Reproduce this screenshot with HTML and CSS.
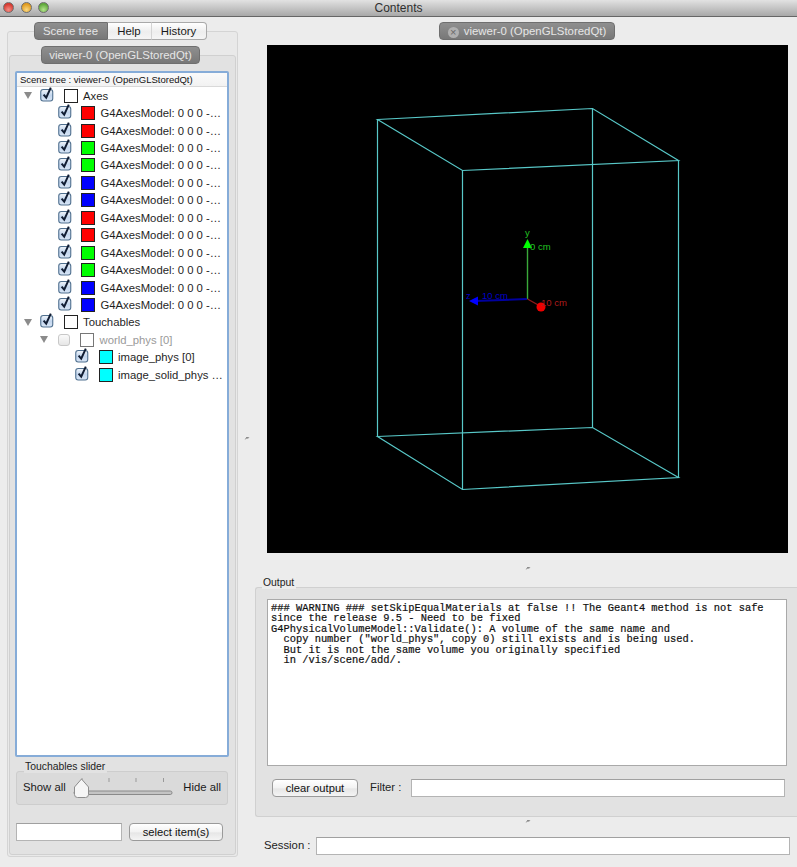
FILE: index.html
```html
<!DOCTYPE html>
<html lang="en">
<head>
<meta charset="utf-8">
<title>Contents</title>
<link rel="stylesheet" href="styles.css">
</head>
<body>
<svg class="defs" width="0" height="0" aria-hidden="true">
  <defs>
    <linearGradient id="boxfill" x1="0" y1="0" x2="0" y2="1"><stop offset="0" stop-color="#f2f6fb"/><stop offset="0.5" stop-color="#c3d6ee"/><stop offset="1" stop-color="#d9e6f6"/></linearGradient>
    <symbol id="chk" viewBox="0 0 14 16">
      <rect x="0.75" y="3.5" width="12" height="11.5" rx="2.5" fill="url(#boxfill)" stroke="#50708f" stroke-width="1.1"/>
      <path d="M3.6 8.6 L6.2 11.6 L10.8 1.6" fill="none" stroke="#111d33" stroke-width="2"/>
    </symbol>
    <symbol id="arrow" viewBox="0 0 6 5">
      <path d="M0.5 4 L2.5 1 L5.5 1.5 L4 2.5 L2.5 2.5 Z" fill="#777"/>
    </symbol>
  </defs>
</svg>
<div class="app">
  <header class="titlebar">
    <div class="lights">
      <span class="light light-red"></span>
      <span class="light light-yellow"></span>
      <span class="light light-green"></span>
    </div>
    <div class="title">Contents</div>
  </header>

  <div class="main">
    <aside class="side">
      <nav class="tabs">
        <span class="tab tab-on tab-scene">Scene tree</span>
        <span class="tab tab-help">Help</span>
        <span class="tab tab-history">History</span>
      </nav>
      <div class="tab-frame">
        <div class="inner-tab-row"><span class="tab tab-on tab-single tab-viewer-side">viewer-0 (OpenGLStoredQt)</span></div>
        <div class="inner-frame">
          <div class="tree">
            <div class="tree-head">Scene tree : viewer-0 (OpenGLStoredQt)</div>
            <div class="tree-rows">
              <div class="row"><span class="tri"></span><svg class="chk"><use href="#chk"/></svg><span class="sw sw-white"></span><span>Axes</span></div>
              <div class="row d1"><span class="notri"></span><svg class="chk"><use href="#chk"/></svg><span class="sw sw-red"></span><span>G4AxesModel: 0 0 0 -…</span></div>
              <div class="row d1"><span class="notri"></span><svg class="chk"><use href="#chk"/></svg><span class="sw sw-red"></span><span>G4AxesModel: 0 0 0 -…</span></div>
              <div class="row d1"><span class="notri"></span><svg class="chk"><use href="#chk"/></svg><span class="sw sw-green"></span><span>G4AxesModel: 0 0 0 -…</span></div>
              <div class="row d1"><span class="notri"></span><svg class="chk"><use href="#chk"/></svg><span class="sw sw-green"></span><span>G4AxesModel: 0 0 0 -…</span></div>
              <div class="row d1"><span class="notri"></span><svg class="chk"><use href="#chk"/></svg><span class="sw sw-blue"></span><span>G4AxesModel: 0 0 0 -…</span></div>
              <div class="row d1"><span class="notri"></span><svg class="chk"><use href="#chk"/></svg><span class="sw sw-blue"></span><span>G4AxesModel: 0 0 0 -…</span></div>
              <div class="row d1"><span class="notri"></span><svg class="chk"><use href="#chk"/></svg><span class="sw sw-red"></span><span>G4AxesModel: 0 0 0 -…</span></div>
              <div class="row d1"><span class="notri"></span><svg class="chk"><use href="#chk"/></svg><span class="sw sw-red"></span><span>G4AxesModel: 0 0 0 -…</span></div>
              <div class="row d1"><span class="notri"></span><svg class="chk"><use href="#chk"/></svg><span class="sw sw-green"></span><span>G4AxesModel: 0 0 0 -…</span></div>
              <div class="row d1"><span class="notri"></span><svg class="chk"><use href="#chk"/></svg><span class="sw sw-green"></span><span>G4AxesModel: 0 0 0 -…</span></div>
              <div class="row d1"><span class="notri"></span><svg class="chk"><use href="#chk"/></svg><span class="sw sw-blue"></span><span>G4AxesModel: 0 0 0 -…</span></div>
              <div class="row d1"><span class="notri"></span><svg class="chk"><use href="#chk"/></svg><span class="sw sw-blue"></span><span>G4AxesModel: 0 0 0 -…</span></div>
              <div class="row"><span class="tri"></span><svg class="chk"><use href="#chk"/></svg><span class="sw sw-white"></span><span>Touchables</span></div>
              <div class="row d1 row-off"><span class="tri"></span><span class="chk-off"></span><span class="sw sw-white"></span><span>world_phys [0]</span></div>
              <div class="row d2"><span class="notri"></span><svg class="chk"><use href="#chk"/></svg><span class="sw sw-cyan"></span><span>image_phys [0]</span></div>
              <div class="row d2"><span class="notri"></span><svg class="chk"><use href="#chk"/></svg><span class="sw sw-cyan"></span><span>image_solid_phys …</span></div>
            </div>
          </div>
          <div class="slider-group">
            <span class="legend legend-slider">Touchables slider</span>
            <span>Show all</span>
            <svg class="slider" width="103" height="24" viewBox="0 0 103 24">
              <rect x="1" y="15" width="98" height="3.5" rx="1.7" fill="#c4c4c4" stroke="#8a8a8a"/>
              <path d="M9 2v3M36 2v4M63 2v4M90.500 2v4" stroke="#999" stroke-width="1"/>
              <path d="M1.500 11 L8.500 3 L15.500 11 V18.500 Q15.500 21.500 12.500 21.500 H4.500 Q1.500 21.500 1.500 18.500 Z" fill="#f6f6f6" stroke="#8e8e8e"/>
            </svg>
            <span>Hide all</span>
          </div>
          <div class="select-row">
            <span class="input input-select"></span>
            <span class="btn btn-select">select item(s)</span>
          </div>
        </div>
      </div>
    </aside>

    <div class="split-v"><svg class="grip"><use href="#arrow"/></svg></div>

    <section class="content">
      <div class="viewer-tab-row">
        <span class="tab tab-on tab-single tab-viewer"><span class="close">×</span>viewer-0 (OpenGLStoredQt)</span>
      </div>
      <svg class="scene" width="521" height="508" viewBox="267 45 521 508">
        <rect x="267" y="45" width="521" height="508" fill="#000"/>
        <g fill="none" stroke="#58c8c8" stroke-width="1.2">
          <path d="M377.500 119.500 L592.500 108.500 L678.500 160.500 L462.500 170.500 Z"/>
          <path d="M377.500 436.500 L592.500 427.500 L678.500 477.500 L462.500 489.500 Z"/>
          <path d="M377.500 119.500 V436.500 M462.500 170.500 V489.500 M592.500 108.500 V427.500 M678.500 160.500 V477.500"/>
        </g>
        <path d="M527.500 299 V245" stroke="#3aa83a" stroke-width="1.400"/>
        <path d="M527.500 239 L532 248 H523 Z" fill="#00ff00"/>
        <text class="axis-label axis-green" x="525" y="236">y</text>
        <text class="axis-label axis-green" x="530" y="250">0 cm</text>
        <path d="M527 299 L475 301" stroke="#0000a0" stroke-width="2"/>
        <path d="M469 301 L478 296.500 V305.500 Z" fill="#0000ff"/>
        <text class="axis-label axis-blue" x="466" y="299">z</text>
        <text class="axis-label axis-blue" x="482" y="299">10 cm</text>
        <path d="M527.500 299 L540 306" stroke="#8e1a1a" stroke-width="1.400"/>
        <circle cx="541" cy="307" r="4.500" fill="#f00000"/>
        <text class="axis-label axis-red" x="541" y="306">10 cm</text>
      </svg>
      <div class="split-h split-a"><svg class="grip"><use href="#arrow"/></svg></div>
      <div class="output">
        <span class="legend legend-output">Output</span>
        <pre class="log">### WARNING ### setSkipEqualMaterials at false !! The Geant4 method is not safe
since the release 9.5 - Need to be fixed
G4PhysicalVolumeModel::Validate(): A volume of the same name and
  copy number ("world_phys", copy 0) still exists and is being used.
  But it is not the same volume you originally specified
  in /vis/scene/add/.</pre>
        <div class="output-controls">
          <span class="btn btn-clear">clear output</span>
          <span class="filter-label">Filter :</span>
          <span class="input input-filter"></span>
        </div>
      </div>
      <div class="split-h split-b"><svg class="grip"><use href="#arrow"/></svg></div>
      <div class="session">
        <span class="session-label">Session :</span>
        <span class="input input-session"></span>
      </div>
    </section>
  </div>
</div>
</body>
</html>
```
FILE: styles.css
```css
* { box-sizing: border-box; }
html, body { margin: 0; padding: 0; }
body { font-family: "Liberation Sans", Arial, sans-serif; font-size: 11.300px; color: #1a1a1a; background: #ececec; }
.defs { position: absolute; }

.app { width: 797px; height: 867px; display: flex; flex-direction: column; background: #ececec; overflow: hidden; }

/* title bar */
.titlebar { height: 17px; flex: none; display: flex; align-items: center; position: relative; justify-content: center; background: linear-gradient(#e2e2e2, #a8a8a8); border-bottom: 1px solid #666; }
.lights { position: absolute; left: 3px; top: 2px; display: flex; gap: 6.500px; }
.light { width: 11px; height: 11px; border-radius: 50%; border: 1px solid #6e6e6e; }
.light-red { background: radial-gradient(circle at 50% 75%, #f58d84, #d63a30 70%); }
.light-yellow { background: radial-gradient(circle at 50% 75%, #fbd980, #e09a1e 70%); }
.light-green { background: radial-gradient(circle at 50% 75%, #b4e48c, #5fa83a 70%); }
.title { font-size: 12px; color: #2f2f2f; line-height: 16px; }

.main { flex: 1; min-height: 0; display: flex; padding-left: 7px; }

/* left pane */
.side { width: 231px; flex: none; padding-top: 5px; margin-bottom: 10px; display: flex; flex-direction: column; }
.tabs { display: flex; justify-content: center; height: 18px; flex: none; margin-left: -5px; position: relative; z-index: 1; }
.tab { height: 18px; line-height: 17px; text-align: center; font-size: 11.400px; background: linear-gradient(#ffffff, #eeeeee 55%, #f5f5f5); border: 1px solid #a9a9a9; color: #1a1a1a; }
.tab-on { background: linear-gradient(#8f8f8f, #787878); border-color: #6f6f6f; color: #e6e6e6; }
.tab-scene { width: 74px; border-radius: 4px 0 0 4px; }
.tab-help { width: 44px; border-left: none; border-right: 1px solid #d4d4d4; }
.tab-history { width: 55px; border-left: none; border-radius: 0 4px 4px 0; }
.tab-single { border-radius: 4px; }
.tab-viewer-side { width: 159px; }

.tab-frame { flex: 1; min-height: 0; margin-top: -9px; padding: 14px 1px 1px; background: #e9e9e9; border: 1px solid #d4d4d4; border-radius: 3px; display: flex; flex-direction: column; }
.inner-tab-row { display: flex; justify-content: center; position: relative; z-index: 1; flex: none; margin-left: -4px; }
.inner-frame { flex: 1; min-height: 0; margin-top: -9px; padding: 15px 5px 13px; background: #e2e2e2; border: 1px solid #d0d0d0; border-radius: 3px; display: flex; flex-direction: column; }

.tree { flex: 1; min-height: 0; width: 214px; background: #fff; border: 2px solid #86acd8; border-radius: 2px; }
.tree-head { height: 14px; font-size: 9.500px; line-height: 14px; padding-left: 3px; border-bottom: 1px solid #d9d9d9; color: #111; background: linear-gradient(#fafafa, #f2f2f2); }
.row { height: 17.450px; display: flex; align-items: center; padding-left: 4px; color: #1f1f1f; white-space: nowrap; }
.d1 { padding-left: 21.500px; }
.d2 { padding-left: 39px; }
.row-off { color: #9a9a9a; }
.tri { width: 0; height: 0; margin: 0 8px 0 3px; border-left: 4px solid transparent; border-right: 4px solid transparent; border-top: 7px solid #8b8b8b; flex: none; }
.d1.row-off .tri { margin-left: 1px; margin-right: 9px; }
.notri { width: 19px; flex: none; }
.chk { width: 14px; height: 16px; margin: -4px 9.500px 0 0; flex: none; }
.chk-off { width: 12px; height: 12px; margin: 0 10.500px 0 1px; flex: none; border: 1px solid #c8c8c8; border-radius: 3px; background: linear-gradient(#fafafa, #e6e6e6); }
.sw { width: 14px; height: 14px; margin-right: 5.500px; flex: none; border: 1px solid #222; }
.sw-white { background: #fff; }
.sw-red { background: #ff0000; }
.sw-green { background: #00ff00; }
.sw-blue { background: #0000ff; }
.sw-cyan { background: #00ffff; }
.row-off .sw { border-color: #777; }

.legend { position: absolute; font-size: 10.400px; line-height: 12px; background: #e2e2e2; color: #222; padding: 0 2px 0 1px; }
.slider-group { position: relative; flex: none; width: 212px; height: 34px; margin: 14px 0 0 1px; padding: 0 6px 2px; display: flex; align-items: center; justify-content: space-between; background: #dadada; border: 1px solid #cdcdcd; border-radius: 3px; }
.legend-slider { left: 7px; top: -11px; }
.slider { margin-top: 2px; }

.select-row { flex: none; display: flex; align-items: center; margin: 17px 0 0 1px; }
.input { display: block; height: 18px; background: #fff; border: 1px solid #b4b4b4; border-top-color: #a0a0a0; }
.input-select { width: 106px; }
.btn { display: block; height: 18px; line-height: 16px; text-align: center; font-size: 11.200px; color: #111; background: linear-gradient(#ffffff, #f2f2f2 50%, #e6e6e6 55%, #f4f4f4); border: 1px solid #9a9a9a; border-radius: 4px; }
.btn-select { width: 94px; margin-left: 7px; margin-top: 1px; }

/* splitter handles */
.split-v { width: 17px; flex: none; display: flex; align-items: center; justify-content: center; padding: 0 6px 0 6px; }
.split-v .grip { margin-top: -7px; }
.grip { width: 6px; height: 5px; display: block; flex: none; }
.split-h { flex: none; display: flex; justify-content: center; padding-left: 3px; }
.split-a { height: 34px; padding-top: 13px; }
.split-b { height: 20px; padding-top: 2px; }

/* right pane */
.content { flex: 1; min-width: 0; padding-top: 5px; display: flex; flex-direction: column; }
.viewer-tab-row { height: 18px; flex: none; display: flex; justify-content: center; padding-left: 2px; }
.tab-viewer { width: 176px; }
.close { display: inline-block; width: 11px; height: 11px; margin-right: 5px; border-radius: 50%; background: #b0b0b0; color: #6a6a6a; font-size: 11px; line-height: 10px; vertical-align: -1px; }
.scene { display: block; flex: none; margin: 5px 0 0 12px; }
.axis-label { font-family: "Liberation Sans", Arial, sans-serif; font-size: 9.500px; }
.axis-green { fill: #22c222; }
.axis-blue { fill: #0000c8; }
.axis-red { fill: #b01c1c; }

.output { position: relative; flex: none; height: 230px; padding: 11px 0 0 11px; background: #e2e2e2; border: 1px solid #d0d0d0; border-right: none; border-radius: 3px 0 0 3px; }
.legend-output { left: 6px; top: -11px; background: #ececec; }
.log { display: block; width: 520px; height: 167px; margin: 0; padding: 3px 3px; background: #fff; border: 1px solid #a9a9a9; font-family: "Liberation Mono", "Courier New", monospace; font-size: 10.400px; line-height: 10.450px; color: #111; overflow: hidden; -webkit-text-stroke: 0.2px #111; }
.output-controls { display: flex; align-items: center; margin-top: 13px; padding-left: 5px; }
.btn-clear { width: 86px; }
.filter-label { width: 41px; margin-left: 12px; padding-bottom: 2px; color: #222; }
.input-filter { width: 374px; }

.session { flex: none; display: flex; align-items: center; padding-left: 9px; }
.session-label { width: 52px; padding-bottom: 2px; color: #222; }
.input-session { width: 474px; }
```
